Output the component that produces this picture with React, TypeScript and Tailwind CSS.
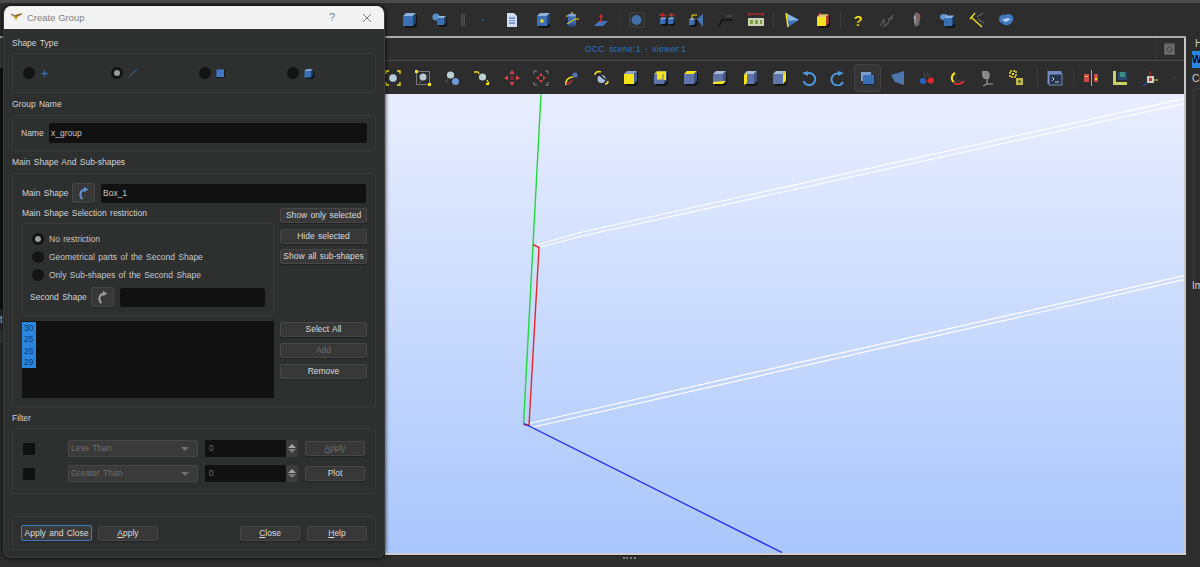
import React from "react";

type CubeProps = { x?: number; y?: number; s?: number; f?: string; t?: string; r?: string };
function Cube({ x = 2, y = 4, s = 9, f = "#3a6fb3", t = "#8fb1dc", r = "#1f4470" }: CubeProps) {
  const d = s * 0.3;
  return (
    <g>
      <path d={`M${x + 1} ${y + s + 1}h${s}l${d} ${-d}v${-s}h${-s}z`} fill="#000" opacity="0.6" transform="translate(0.8 0.8)" />
      <path d={`M${x} ${y}l${d} ${-d}h${s}l${-d} ${d}z`} fill={t} />
      <path d={`M${x + s} ${y}l${d} ${-d}v${s}l${-d} ${d}z`} fill={r} />
      <rect x={x} y={y} width={s} height={s} fill={f} />
    </g>
  );
}

const Y = "#f5e21c";
const DB = "#5f74a8";

function Glyph({ k }: { k: string }) {
  switch (k) {
    case "box":
      return <Cube x={2} y={4} s={10} />;
    case "two":
      return (<g><circle cx="5" cy="5" r="3.6" fill="#5b8dc9" /><Cube x={6} y={6} s={7} /></g>);
    case "grip":
      return (<g fill="#5a5a5a"><rect x="6" y="1" width="1.4" height="14" /><rect x="8.6" y="1" width="1.4" height="14" /></g>);
    case "dot":
      return <rect x="7" y="7" width="2" height="2" fill="#2f5f96" />;
    case "doc":
      return (<g><path d="M3 1h7l3 3v11H3z" fill="#cfdcf2" /><path d="M5 5h6v2H5zM5 8h6v1H5zM5 10h6v2H5z" fill="#7d9cd0" /></g>);
    case "boxy":
      return (<g><Cube x={3} y={4} s={10} /><rect x="6.5" y="7.5" width="3" height="3" fill={Y} /></g>);
    case "cyl":
      return (<g><rect x="4" y="3" width="8" height="10" fill="#3c6aa8" /><ellipse cx="8" cy="3" rx="4" ry="1.6" fill="#86a8d6" /><ellipse cx="8" cy="13" rx="4" ry="1.6" fill="#2b5288" /><path d="M3 12L11 7H15M2 4h2M8 0v2" stroke={Y} strokeWidth="1" fill="none" /></g>);
    case "plane":
      return (<g><path d="M1 14l5-5h9l-5 5z" fill="#3f74bb" /><path d="M8 11V4" stroke="#e22b2b" strokeWidth="1.3" /><path d="M6 5l2-3 2 3z" fill="#e22b2b" /></g>);
    case "sph":
      return (<g><rect x="1" y="1" width="14" height="14" rx="2" fill="none" stroke="#444" strokeWidth="1.2" /><circle cx="7.5" cy="8" r="5" fill="#3f6ea8" /></g>);
    case "tworeds":
      return (<g><Cube x={1} y={7} s={5} /><Cube x={9} y={7} s={5} /><path d="M0 3h7M9 3h7" stroke="#e22b2b" strokeWidth="1.2" /><path d="M3.5 1v4M12.5 1v4" stroke="#e22b2b" /></g>);
    case "wedge":
      return (<g><Cube x={1} y={8} s={5} /><path d="M9 7l6-5v13z" fill="#4675b1" /><path d="M4 7V3h5" stroke={Y} fill="none" /></g>);
    case "poly":
      return (<g><path d="M1 14l3-6h11" stroke="#111" strokeWidth="1.4" fill="none" /><path d="M8 4h6" stroke="#4c4c4c" strokeWidth="1.5" /></g>);
    case "dim":
      return (<g><path d="M1 2h14M1 1v3M15 1v3" stroke="#e22b2b" /><rect x="0" y="6" width="16" height="8" fill="#c8d4b8" /><path d="M2 8h3v4H2zM7 8h3v4H7zM12 8h2v4h-2z" fill="#7c9e3e" /></g>);
    case "tri":
      return (<g><path d="M2 1l13 7-11 7z" fill="#3d73b8" /><path d="M2 1l13 7-10 1z" fill="#8bb1de" /><path d="M2 1l2 14" stroke={Y} strokeWidth="1.5" /></g>);
    case "ybox":
      return (<g><Cube x={3} y={5} s={9} f={Y} t="#d9c27a" r="#b53a2c" /><path d="M4 3l3-2" stroke="#e22b2b" /></g>);
    case "help":
      return <text x="8" y="14" textAnchor="middle" fontSize="15" fontWeight="700" fill={Y} fontFamily="Liberation Sans, sans-serif" stroke="#000" strokeWidth="0.2">?</text>;
    case "ghost":
      return <path d="M2 14c1-5 3-8 3-6s0 5 2 5 3-6 7-10M7 13l-3 2M9 7l5-1" stroke="#5a5a5a" strokeWidth="1.3" fill="none" />;
    case "wrench":
      return (<g><path d="M6 1c4-1 6 2 5 6l-1 6-4 2-1-4 1-3-2-2z" fill="#6c6c6c" /><path d="M9 3v5" stroke="#b34a4a" strokeWidth="1.3" /><path d="M6 4v7" stroke="#ccc" /></g>);
    case "twob":
      return (<g><ellipse cx="5" cy="5" rx="4" ry="3" fill="#5f97d4" /><Cube x={5} y={6} s={8} /></g>);
    case "ylines":
      return (<g><path d="M1 7l5-6 M2 5l11 10" stroke={Y} strokeWidth="1.3" fill="none" /><path d="M8 5l6-4M9 7l6 4" stroke="#666" strokeWidth="1.2" /></g>);
    case "cloud":
      return (<g><path d="M1 7c0-3 3-5 6-4 3-2 8-1 8 3 1 3-2 6-5 7-3 1-5-1-6-2-2 0-3-2-3-4z" fill="#3f79c2" /><path d="M4 8l4 2 5-3-4-1z" fill="#b9cff0" /></g>);
    case "fit":
      return (<g><circle cx="8" cy="8" r="3.8" fill="#b8d0dc" /><path d="M1 4V1h3M12 1h3v3M15 12v3h-3M4 15H1v-3" stroke={Y} strokeWidth="1.3" fill="none" /></g>);
    case "area":
      return (<g><rect x="1.5" y="1.5" width="13" height="13" fill="none" stroke="#777" /><circle cx="8" cy="7" r="3.5" fill="#b8c8d0" /><path d="M4 13l3-3" stroke="#777" /><path d="M0 0h3v3H0zM13 13h3v3h-3z" fill={Y} /></g>);
    case "zoom":
      return (<g><circle cx="6.5" cy="5" r="3.6" fill="#bcd0d8" /><path d="M1 13l3-4" stroke="#555" strokeWidth="1.2" /><circle cx="11.5" cy="11.5" r="3.5" fill="#6c9ad8" /></g>);
    case "zoomy":
      return (<g><circle cx="8.5" cy="7" r="3.6" fill="#bcd0d8" /><path d="M0 2h4l1 2M13 10l2 4" stroke={Y} strokeWidth="1.3" /><path d="M12 13h3v2h-3z" fill={Y} /></g>);
    case "pan":
      return (<g fill="#d8414c"><path d="M8 0l2.5 4h-5zM8 16l-2.5-4h5zM0 8l4-2.5v5zM16 8l-4 2.5v-5z" /><circle cx="8" cy="8" r="2" fill="#8a2a32" /></g>);
    case "panc":
      return (<g><g fill="#d8414c"><path d="M8 3l2 3H6zM8 13l-2-3h4zM3 8l3-2v4zM13 8l-3 2V6z" /></g><path d="M1 4V1h3M12 1h3v3M15 12v3h-3M4 15H1v-3" stroke="#888" fill="none" /></g>);
    case "rot":
      return (<g><path d="M3 15c-1-4 2-8 7-8" stroke={Y} strokeWidth="1.6" fill="none" /><path d="M3 13c2 2 5 0 6-3" stroke="#d33" strokeWidth="1.2" fill="none" /><circle cx="12" cy="5" r="2.6" fill="#4d74b8" /></g>);
    case "orbit":
      return (<g><circle cx="8.5" cy="9" r="4" fill="#a8bde0" /><path d="M2 2c3 0 9 5 12 10" stroke="#555" /><path d="M2 5c0-3 3-4 6-3M12 14c2 0 3-1 3-3" stroke={Y} strokeWidth="1.5" fill="none" /></g>);
    case "front":
      return <Cube x={2} y={4} s={10} f={Y} t="#8ea3c4" r="#47618f" />;
    case "back":
      return (<g><Cube x={2} y={4} s={10} f={DB} t="#c9b84a" r="#3f5480" /><path d="M5 2h9v8H5z" fill={Y} /><path d="M5 10h6V4" fill="none" stroke={DB} /></g>);
    case "top":
      return <Cube x={2} y={4} s={10} f={DB} t={Y} r="#3f5480" />;
    case "bottom":
      return (<g><Cube x={2} y={4} s={10} f={DB} t="#a8b9d8" r="#3f5480" /><path d="M2 14h10l3-3H12l-10 1z" fill={Y} /></g>);
    case "left":
      return (<g><Cube x={3} y={4} s={10} f={DB} t="#a8b9d8" r="#3f5480" /><path d="M3 5l3-2v10l-3 2z" fill={Y} /></g>);
    case "right":
      return <Cube x={2} y={4} s={10} f={DB} t="#a8b9d8" r={Y} />;
    case "undo":
      return (<g><path d="M5 3a6 6 0 1 1-2.500 7" transform="translate(1 1)" stroke="#4f98e0" strokeWidth="2" fill="none" /><path d="M2 3l6-2v5z" fill="#4f98e0" /></g>);
    case "redo":
      return (<g><path d="M10 4a6 6 0 1 0 3 8" stroke="#4f98e0" strokeWidth="2" fill="none" /><path d="M14 3L8 1v5z" fill="#4f98e0" /></g>);
    case "trans":
      return (<g><path d="M1 2h10v9H1z" fill="#7a9cc8" /><rect x="3" y="5" width="11" height="9" fill="#3a6fb3" /><path d="M14 5l1 1v9H4l-1-1h11z" fill="#16263e" /></g>);
    case "wedgeb":
      return <path d="M1 5l13-4v14L5 12z" fill="#4c76ac" />;
    case "glasses":
      return (<g><circle cx="4" cy="11" r="3" fill="#2a62c4" /><circle cx="12" cy="10.500" r="3" fill="#dd2a2a" /><path d="M5 2l1 5M8 2v5M11 2l-1 5" stroke="#444" /><rect x="6.500" y="10" width="2.500" height="2" fill="#7a2a2a" /></g>);
    case "rotc":
      return (<g><path d="M6 3C2 5 2 10 5 12" stroke={Y} strokeWidth="2" fill="none" /><path d="M5 13c3 2 8 1 10-2" stroke="#d33" strokeWidth="1.8" fill="none" /><path d="M7 3v8h6" stroke="#444" fill="none" /></g>);
    case "figure":
      return (<g><path d="M3 1h6l2 3-1 5H5L3 6z" fill="#8a8a8a" /><path d="M8 8v6h6M8 14l-4 2" stroke="#9c9c9c" strokeWidth="1.2" fill="none" /></g>);
    case "sq":
      return (<g><path d="M2 1h6v6H2z" fill="none" stroke={Y} strokeWidth="1.5" strokeDasharray="2 1" /><rect x="8" y="8" width="7" height="7" fill="#c4bb46" /><path d="M4 3h2v2H4z" fill={Y} /><path d="M10 10h3v3h-3z" fill="#6f7a30" /></g>);
    case "win":
      return (<g><rect x="0.500" y="1" width="14" height="13" fill="#6d86bc" /><rect x="2" y="4" width="13" height="11" fill="#26344f" stroke="#8ba2d0" strokeWidth="0.8" /><path d="M5 7l2 2-2 2M8 12h4" stroke="#bcd" fill="none" /></g>);
    case "clip":
      return (<g><path d="M8.500 0v16" stroke="#aaa" strokeWidth="1" /><rect x="1" y="4" width="5" height="8" fill="#cf4a4a" /><rect x="11" y="4" width="4" height="8" fill="#cf4a4a" /><path d="M2 6h3v1H2zM12 8h2v2h-2z" fill={Y} /></g>);
    case "lshape":
      return (<g><path d="M1 1h3v11h11v3H1z" fill="#c8d06a" /><rect x="6" y="2" width="9" height="8" fill="#2e4c70" /><path d="M8 2h5v5H8z" fill="#3d8d80" /></g>);
    case "axes":
      return (<g><rect x="5" y="6" width="7" height="7" fill="#ccc" /><rect x="7" y="8" width="3" height="3" fill="#c33" /><path d="M8 7V1" stroke="#d22" /><path d="M12 10h4" stroke={Y} /><path d="M5 13l-4 3" stroke="#2a4fc0" strokeWidth="1.3" /></g>);
    case "arrow":
      return (<g><path d="M6 15C2 10 4 5 9 4" stroke="#5f92d6" strokeWidth="2.400" fill="none" /><path d="M8 1l5 3-5 3z" fill="#5f92d6" /></g>);
    case "arrowg":
      return (<g><path d="M6 15C2 10 4 5 9 4" stroke="#9a9a9a" strokeWidth="2.400" fill="none" /><path d="M8 1l5 3-5 3z" fill="#9a9a9a" /></g>);
    case "plus":
      return <path d="M8 4v8M4 8h8" stroke="#3a6ea8" strokeWidth="1.600" />;
    case "line":
      return <path d="M3 13L13 3" stroke="#3f6ea8" strokeWidth="1" />;
    case "face":
      return (<g><rect x="3" y="3" width="10" height="10" fill="#3f78c4" /><path d="M13 3v10H3" stroke="#111" fill="none" strokeWidth="1.200" /></g>);
    case "solid":
      return <Cube x={3} y={5} s={8} f="#3a6fb3" t="#7c9fce" r="#1f4470" />;
    default:
      return null;
  }
}

function Icon({ k, size = 16 }: { k: string; size?: number }) {
  return (
    <svg width={size} height={size} viewBox="0 0 16 16" className="block shrink-0">
      <Glyph k={k} />
    </svg>
  );
}

function Tool({ k, on }: { k: string; on?: boolean }) {
  return (
    <div className="w-[29.7px] h-full flex items-center justify-center shrink-0">
      {on ? (
        <div className="w-[27px] h-[28px] flex items-center justify-center bg-[#353535] border border-[#424242] rounded-sm">
          <Icon k={k} />
        </div>
      ) : (
        <Icon k={k} />
      )}
    </div>
  );
}

function Btn({ children, cls = "", dis }: { children: React.ReactNode; cls?: string; dis?: boolean }) {
  return (
    <div
      className={
        "flex items-center justify-center bg-[#383838] border border-[#474747] rounded-[2px] shrink-0 shadow-[0_1px_0_#222] whitespace-nowrap " +
        (dis ? "text-[#6d6d6d] " : "text-[#dcdcdc] ") +
        cls
      }
    >
      {children}
    </div>
  );
}

function Radio({ on }: { on?: boolean }) {
  return (
    <div className="w-[12px] h-[12px] rounded-full bg-[#141414] flex items-center justify-center shrink-0">
      {on && <div className="w-[6px] h-[6px] rounded-full bg-[#9a9a9a]" />}
    </div>
  );
}

function Group({ title, cls, titleCls, children }: { title: string; cls: string; titleCls: string; children: React.ReactNode }) {
  return (
    <div className="flex flex-col">
      <div className={"flex items-center text-[#d4d4d4] " + titleCls}>{title}</div>
      <div className={"border border-[#383838] rounded-[2px] " + cls}>{children}</div>
    </div>
  );
}

function Spin() {
  return (
    <div className="w-[93px] h-[17px] flex shrink-0">
      <div className="w-[81px] bg-[#111111] pl-[4px] flex items-center text-[#6d6d6d]">0</div>
      <div className="w-[12px] bg-[#3c3c3c] flex flex-col items-center justify-center gap-[1px]">
        <div className="w-0 h-0 border-l-[4px] border-r-[4px] border-b-[4px] border-l-transparent border-r-transparent border-b-[#a6a6a6]" />
        <div className="w-0 h-0 border-l-[4px] border-r-[4px] border-t-[4px] border-l-transparent border-r-transparent border-t-[#7a7a7a]" />
      </div>
    </div>
  );
}

function Combo({ label, cls }: { label: string; cls: string }) {
  return (
    <div className={"w-[130px] bg-[#3a3a3a] border border-[#474747] rounded-[2px] flex items-center justify-between pl-[2px] pr-[8px] text-[#6d6d6d] shrink-0 " + cls}>
      <span>{label}</span>
      <div className="w-0 h-0 border-l-[4px] border-r-[4px] border-t-[4px] border-l-transparent border-r-transparent border-t-[#6f6f6f]" />
    </div>
  );
}

function Dialog() {
  return (
    <div className="absolute left-[3px] top-[6px] w-[382px] h-[552px] bg-[#2e2f2f] rounded-lg border-b border-l border-r border-[#3d3d3d] overflow-hidden flex flex-col shadow-[0_0_4px_#000] text-[8.5px] [word-spacing:1px] leading-none">
      <div className="h-[23px] bg-[#f3f3f3] flex items-center shrink-0 pl-[6px] pr-[12px]">
        <svg width="13" height="9" viewBox="0 0 13 9" className="shrink-0">
          <path d="M0 1l5 2 2-2 6-1-4 3-2 2-1 3-1-3z" fill="#c99a2e" />
          <path d="M1 1l5 2 6-2" stroke="#333" strokeWidth="0.700" fill="none" />
        </svg>
        <span className="ml-[4px] text-[#808080] text-[9.5px] [word-spacing:0px]">Create Group</span>
        <span className="ml-auto text-[#808080] text-[11px]">?</span>
        <svg width="10" height="10" viewBox="0 0 10 10" className="ml-[27px]">
          <path d="M1 1l8 8M9 1l-8 8" stroke="#7a7a7a" strokeWidth="1" />
        </svg>
      </div>

      <div className="pl-[8px] pr-[8px] flex flex-col">
        <Group title="Shape Type" titleCls="h-[24px] pt-[4px]" cls="h-[40px] grid grid-cols-4 items-center pl-[10px]">
          {[
            ["plus", false],
            ["line", true],
            ["face", false],
            ["solid", false],
          ].map(([k, on]) => (
            <div key={k as string} className="flex items-center gap-[3px]">
              <Radio on={on as boolean} />
              <Icon k={k as string} size={13} />
            </div>
          ))}
        </Group>

        <Group title="Group Name" titleCls="h-[22px]" cls="h-[36px] flex items-center pl-[8px] pr-[8px]">
          <span className="w-[28px] text-[#d4d4d4] shrink-0">Name</span>
          <div className="flex-1 h-[20px] bg-[#111111] rounded-[2px] flex items-center pl-[2px] text-[#c8c8c8]">x_group</div>
        </Group>

        <Group title="Main Shape And Sub-shapes" titleCls="h-[22px] pt-[1px]" cls="h-[234px] pt-[9px] pl-[9px] pr-[9px]">
          <div className="flex items-center h-[20px]">
            <span className="w-[50px] text-[#d4d4d4] shrink-0 whitespace-nowrap">Main Shape</span>
            <Btn cls="w-[23px] h-[20px]"><Icon k="arrow" size={14} /></Btn>
            <div className="ml-[6px] flex-1 h-[19px] bg-[#111111] rounded-[2px] flex items-center pl-[2px] text-[#c8c8c8]">Box_1</div>
          </div>
          <div className="flex gap-[6px]">
            <div className="w-[252px] shrink-0">
              <div className="h-[20px] flex items-center text-[#d4d4d4]">Main Shape Selection restriction</div>
              <div className="h-[93px] border border-[#3a3a3a] rounded-[2px] pl-[9px] pt-[6px] flex flex-col">
                <div className="h-[18px] flex items-center gap-[5px] text-[#c8c8c8]"><Radio on /> <span>No restriction</span></div>
                <div className="h-[18px] flex items-center gap-[5px] text-[#c8c8c8]"><Radio /> <span>Geometrical parts of the Second Shape</span></div>
                <div className="h-[18px] flex items-center gap-[5px] text-[#c8c8c8]"><Radio /> <span>Only Sub-shapes of the Second Shape</span></div>
                <div className="flex items-center h-[20px] mt-[3px] -ml-[2px]">
                  <span className="w-[61px] text-[#d4d4d4] shrink-0 whitespace-nowrap">Second Shape</span>
                  <Btn cls="w-[23px] h-[20px]"><Icon k="arrowg" size={14} /></Btn>
                  <div className="ml-[6px] w-[145px] h-[19px] bg-[#111111] rounded-[2px]" />
                </div>
              </div>
            </div>
            <div className="pt-[5px] flex flex-col gap-[5.500px]">
              <Btn cls="w-[87px] h-[15px]">Show only selected</Btn>
              <Btn cls="w-[87px] h-[15px]">Hide selected</Btn>
              <Btn cls="w-[87px] h-[15px]">Show all sub-shapes</Btn>
            </div>
          </div>
          <div className="flex gap-[6px] mt-[5px]">
            <div className="w-[252px] h-[77px] bg-[#111111] shrink-0">
              <div className="w-[14px] bg-[#2b86e0] text-[#123a66] flex flex-col mt-[1px] pl-[2px]">
                {["30", "25", "26", "29"].map((n) => (
                  <div key={n} className="h-[11.500px] flex items-center">{n}</div>
                ))}
              </div>
            </div>
            <div className="pt-[1px] flex flex-col gap-[6px]">
              <Btn cls="w-[87px] h-[15px]">Select All</Btn>
              <Btn cls="w-[87px] h-[15px]" dis>Add</Btn>
              <Btn cls="w-[87px] h-[15px]">Remove</Btn>
            </div>
          </div>
        </Group>

        <Group title="Filter" titleCls="h-[21px] pt-[1px]" cls="h-[66px] pl-[10px] pr-[10px] pt-[11px] flex flex-col gap-[8px]">
          <div className="flex items-center h-[17px]">
            <div className="w-[12px] h-[12px] bg-[#111111] shrink-0" />
            <div className="w-[33px] shrink-0" />
            <Combo label="Less Than" cls="h-[17px]" />
            <div className="w-[7px] shrink-0" />
            <Spin />
            <Btn cls="ml-[7px] w-[60px] h-[15px]" dis><span><u>A</u>pply</span></Btn>
          </div>
          <div className="flex items-center h-[17px]">
            <div className="w-[12px] h-[12px] bg-[#111111] shrink-0" />
            <div className="w-[33px] shrink-0" />
            <Combo label="Greater Than" cls="h-[17px]" />
            <div className="w-[7px] shrink-0" />
            <Spin />
            <Btn cls="ml-[7px] w-[60px] h-[15px]">Plot</Btn>
          </div>
        </Group>

        <div className="mt-[22px] h-[34px] border border-[#383838] rounded-[2px] flex items-center pl-[8px] pr-[8px]">
          <Btn cls="w-[71px] h-[16px] !border-[#3a7fc8] !bg-[#3a3a3a]"><span>Apply and Close</span></Btn>
          <Btn cls="ml-[6px] w-[60px] h-[15px]"><span><u>A</u>pply</span></Btn>
          <Btn cls="ml-auto w-[60px] h-[15px]"><span><u>C</u>lose</span></Btn>
          <Btn cls="ml-[7px] w-[60px] h-[15px]"><span><u>H</u>elp</span></Btn>
        </div>
      </div>
    </div>
  );
}

const sep = "w-px h-[18px] bg-[#3a3a3a] shrink-0";

export default function App() {
  return (
    <div
      className="relative w-[1200px] h-[567px] overflow-hidden bg-[#2d2d2d] flex flex-col"
      style={{ fontFamily: '"Liberation Sans", "Noto Sans", sans-serif' }}
    >
      {/* main toolbar */}
      <div className="h-[36px] shrink-0 border-t-[3px] border-t-[#4a4a4a] relative flex items-center pl-[394px]">
        <div className="flex items-center h-full">
          <Tool k="box" />
          <Tool k="two" />
          <div className="w-[20px] flex justify-center shrink-0"><Icon k="grip" size={14} /></div>
          <div className="w-[20px] flex justify-center shrink-0"><Icon k="dot" size={14} /></div>
          <div className="w-[4px] shrink-0" />
          <Tool k="doc" />
          <Tool k="boxy" />
          <Tool k="cyl" />
          <Tool k="plane" />
          <div className={sep + " ml-[3px] mr-[2px]"} />
          <Tool k="sph" />
          <Tool k="tworeds" />
          <Tool k="wedge" />
          <Tool k="poly" />
          <Tool k="dim" />
          <div className={sep + " ml-[2px] mr-[4px]"} />
          <Tool k="tri" />
          <Tool k="ybox" />
          <div className={sep + " ml-[3px] mr-[2px]"} />
          <Tool k="help" />
          <Tool k="ghost" />
          <Tool k="wrench" />
          <Tool k="twob" />
          <Tool k="ylines" />
          <Tool k="cloud" />
        </div>
      </div>
      <div className="h-[2px] bg-[#a9a9a9] shrink-0 mr-[14px]" />

      <div className="flex-1 flex min-h-0">
        {/* left dock, mostly behind the dialog */}
        <div className="w-[385px] shrink-0 flex flex-col text-[#cfcfcf] text-[10px] leading-none">
          <div className="h-[30px] bg-[#3a3a3a]" />
          <div className="h-[241px] bg-[#121212]" />
          <div className="h-[22px] flex items-center bg-[#2d2d2d]">t</div>
          <div className="h-[12px] bg-[#3a3a3a]" />
          <div className="flex-1 bg-[#2d2d2d]" />
        </div>

        {/* viewer */}
        <div className="w-[801px] shrink-0 flex flex-col border-r-2 border-r-[#c8c8c8] min-w-0">
          <div className="h-[22px] shrink-0 flex items-center pr-[2px]">
            <div className="flex-1 h-full border-r border-[#3a3a3a] flex items-center text-[#2a74c8] text-[8.5px] tracking-[0.3px] [word-spacing:1.5px] pl-[200px] leading-none">
              OCC scene:1 - viewer:1
            </div>
            <div className="w-[11px] h-[12px] mx-[7px] bg-[#565656] flex items-center justify-center">
              <svg width="9" height="9" viewBox="0 0 9 9" className="block"><path d="M0.500 0.500l8 8M8.500 0.500l-8 8M0.500 0.500h8v8h-8z" stroke="#7d7d7d" strokeWidth="0.800" fill="none" /></svg>
            </div>
          </div>
          <div className="h-px bg-[#4d4d4d] shrink-0" />
          <div className="h-[33px] shrink-0 overflow-hidden">
            <div className="flex items-center h-full -ml-[7px]">
              {["fit", "area", "zoom", "zoomy", "pan", "panc", "rot", "orbit", "front", "back", "top", "bottom", "left", "right", "undo", "redo"].map((k) => (
                <Tool key={k} k={k} />
              ))}
              <Tool k="trans" on />
              {["wedgeb", "glasses", "rotc", "figure", "sq"].map((k) => (
                <Tool key={k} k={k} />
              ))}
              <div className={sep + " ml-[5.500px] mr-[2.500px]"} />
              <Tool k="win" />
              <div className={sep + " ml-[3px] mr-[2px]"} />
              <Tool k="clip" />
              <Tool k="lshape" />
              <Tool k="axes" />
              <span className="ml-[6px] text-[#3f3f3f] text-[10px]">»</span>
            </div>
          </div>
          <div className="flex-1 min-h-0 bg-gradient-to-b from-[#e9eefe] to-[#a9c6fc]">
            <svg viewBox="0 0 799 458" className="block w-full h-full">
              <g transform="translate(-385 -94)" fill="none">
                <path d="M535 245L580 232L1185 98" stroke="#ffffff" strokeWidth="1.200" />
                <path d="M539 247L580 236L1185 103" stroke="#ffffff" strokeWidth="1.200" />
                <path d="M529 423L1185 275" stroke="#ffffff" strokeWidth="1.200" />
                <path d="M531 427L1185 279" stroke="#ffffff" strokeWidth="1.200" />
                <path d="M541 94L523.500 424" stroke="#22d83a" strokeWidth="1.400" />
                <path d="M533 244L539 247L529 425L523.500 424" stroke="#e22a2a" strokeWidth="1.400" />
                <path d="M524 423L782 552" stroke="#1a22e8" strokeWidth="1.200" />
              </g>
            </svg>
          </div>
        </div>

        {/* right dock */}
        <div className="flex-1 min-w-0 overflow-hidden text-[#d0d0d0] text-[10px] leading-none pl-[6px] flex flex-col whitespace-nowrap">
          <div className="h-[10px] mt-[1px] flex items-center pl-[3px]">H</div>
          <div className="h-[17px] mt-[2px] w-[10px] bg-[#2b86e0] flex items-center text-[#000] font-bold">W</div>
          <div className="mt-[5px] h-[12px] flex items-center">Cr</div>
          <div className="mt-[3px] ml-[1px] h-[192px] border-l border-t border-[#3d3d3d] rounded-tl-sm" />
          <div className="h-[12px] flex items-center">Im</div>
        </div>
      </div>

      {/* bottom edge */}
      <div className="h-[3px] shrink-0 bg-[#cfcfcf] border-b border-b-[#1e1e1e] ml-[385px] mr-[14px]" />
      <div className="h-[11px] shrink-0 flex justify-center pt-[1px] pl-[58px]">
        <div className="w-[13px] h-[2px] border-t-2 border-dotted border-[#7d7d7d]" />
      </div>

      <Dialog />
    </div>
  );
}
